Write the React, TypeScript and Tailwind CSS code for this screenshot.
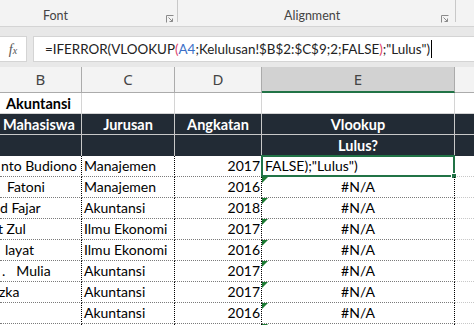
import React from 'react';

const cellFont = { fontFamily: 'Lato, "Liberation Sans", sans-serif' };

type Row = { name: React.ReactNode; namePad: string; jurusan: string; angkatan: string; vlookup: string };

const rows: Row[] = [
  { name: 'nto Budiono', namePad: 'pl-[1px]', jurusan: 'Manajemen', angkatan: '2017', vlookup: 'FALSE);"Lulus")' },
  { name: 'Fatoni', namePad: 'pl-[7px]', jurusan: 'Manajemen', angkatan: '2016', vlookup: '#N/A' },
  { name: 'd Fajar', namePad: 'pl-0', jurusan: 'Akuntansi', angkatan: '2018', vlookup: '#N/A' },
  { name: 't Zul', namePad: '-ml-[2px]', jurusan: 'Ilmu Ekonomi', angkatan: '2017', vlookup: '#N/A' },
  { name: 'layat', namePad: 'pl-[5px]', jurusan: 'Ilmu Ekonomi', angkatan: '2016', vlookup: '#N/A' },
  { name: <><span>.</span><span className="ml-[11px]">Mulia</span></>, namePad: 'pl-[2px]', jurusan: 'Akuntansi', angkatan: '2017', vlookup: '#N/A' },
  { name: 'zka', namePad: '-ml-[1px]', jurusan: 'Akuntansi', angkatan: '2017', vlookup: '#N/A' },
  { name: '', namePad: '', jurusan: 'Akuntansi', angkatan: '2016', vlookup: '#N/A' },
];

function Launcher() {
  return (
    <svg width="8" height="8" viewBox="0 0 8 8" className="text-[#8a8a8a] mb-[3px]">
      <path d="M0.5 7.5V0.5H7.5" fill="none" stroke="currentColor" strokeWidth="1" />
      <path d="M2.5 2.5L6.5 6.5M3.5 6.5H6.5V3.5" fill="none" stroke="currentColor" strokeWidth="1" />
    </svg>
  );
}

function ErrorMark() {
  return <div className="absolute left-0 top-0 w-0 h-0 border-t-[6px] border-t-[#1e7b34] border-r-[6px] border-r-transparent" />;
}

export default function App() {
  return (
    <div className="w-[474px] h-[325px] overflow-hidden bg-white relative">
      {/* Ribbon group labels */}
      <div className="h-[27px] bg-[#f3f3f3] border-b border-[#d4d4d4] flex items-start" style={{ fontFamily: 'Lato, "Noto Sans", sans-serif' }}>
        <div className="w-[177px] h-full flex items-end justify-between pl-[43px] pr-[3px]">
          <span className="text-[12.5px] leading-none text-[#444] pb-[4px]">Font</span>
          <Launcher />
        </div>
        <div className="w-px h-[22px] bg-[#c8c8c8]" />
        <div className="w-[277px] h-full flex items-end justify-between pl-[106px] pr-[6px]">
          <span className="text-[12.5px] leading-none text-[#444] pb-[4px]">Alignment</span>
          <Launcher />
        </div>
        <div className="w-px h-[22px] bg-[#c8c8c8]" />
      </div>

      {/* Formula bar */}
      <div className="h-[40px] bg-[#e8e8e8] flex items-start pt-[9px] gap-[6px]">
        <div className="w-[27px] h-[26px] bg-white border border-l-0 border-[#d4d4d4] flex items-center justify-center text-[#555]" style={{ fontFamily: '"Liberation Serif", serif' }}>
          <span className="italic text-[14px]">f</span><span className="italic text-[10px] mt-[3px]">x</span>
        </div>
        <div className="flex-1 h-[26px] bg-white border border-r-0 border-[#d4d4d4] flex items-center pl-[11px] text-[13.4px] text-[#222] whitespace-nowrap" style={{ fontFamily: 'Lato, "Noto Sans", sans-serif' }}>
          <span>=IFERROR(VLOOKUP</span>
          <span className="text-[#e0446a]">(</span>
          <span className="text-[#3b6fc7]">A4</span>
          <span>;Kelulusan!$B$2:$C$9;2;FALSE</span>
          <span className="text-[#e0446a]">)</span>
          <span>;"Lulus")</span>
          <span className="w-[1px] h-[18px] bg-black ml-[1px]" />
        </div>
      </div>

      {/* Column headers */}
      <div className="grid grid-cols-[82px_93px_87px_193px_19px] h-[26px] bg-[#f3f3f3] text-[15px] text-[#444]" style={{ fontFamily: '"Noto Sans", sans-serif' }}>
        <div className="border-r border-b border-[#ababab] flex items-center justify-center">B</div>
        <div className="border-r border-b border-[#ababab] flex items-center justify-center">C</div>
        <div className="border-r border-b border-[#ababab] flex items-center justify-center">D</div>
        <div className="border-r border-[#ababab] border-b-2 border-b-[#217346] bg-[#d2d2d2] flex items-center justify-center">E</div>
        <div className="border-b border-[#ababab]" />
      </div>

      {/* Sheet */}
      <div className="grid grid-cols-[82px_93px_87px_193px_19px] auto-rows-[21px] text-[14px] text-black" style={cellFont}>
        {/* Title row */}
        <div className="border-r border-b border-[#d4d4d4] font-bold text-[14.5px] text-right pr-[10px] leading-[21px] whitespace-nowrap">Akuntansi</div>
        <div className="border-r border-b border-[#d4d4d4]" />
        <div className="border-r border-b border-[#d4d4d4]" />
        <div className="border-r border-b border-[#d4d4d4]" />
        <div className="border-b border-[#d4d4d4]" />

        {/* Header rows */}
        <div className="bg-[#222b35] border-r border-b border-[#c8c8c8] text-white font-bold text-[14.5px] pl-[3px] leading-[21px] whitespace-nowrap overflow-hidden">Mahasiswa</div>
        <div className="bg-[#222b35] border-r border-b border-[#c8c8c8] text-white font-bold text-[14.5px] text-center leading-[21px]">Jurusan</div>
        <div className="bg-[#222b35] border-r border-b border-[#c8c8c8] text-white font-bold text-[14.5px] text-center leading-[21px]">Angkatan</div>
        <div className="bg-[#222b35] border-r border-b border-[#c8c8c8] text-white font-bold text-[14.5px] text-center leading-[21px]">Vlookup</div>
        <div className="bg-[#222b35] border-b border-[#c8c8c8]" />

        <div className="bg-[#222b35] border-r border-[#c8c8c8]" />
        <div className="bg-[#222b35] border-r border-[#c8c8c8]" />
        <div className="bg-[#222b35] border-r border-[#c8c8c8]" />
        <div className="bg-[#222b35] border-r border-[#c8c8c8] text-white font-bold text-[14.5px] text-center leading-[21px]">Lulus?</div>
        <div className="bg-[#222b35]" />

        {rows.map((r, i) => (
          <React.Fragment key={i}>
            <div className="border-r border-r-black border-b border-dotted border-b-[#7a7a7a] leading-[20px] whitespace-nowrap overflow-hidden">
              <span className={`inline-block ${r.namePad}`}>{r.name}</span>
            </div>
            <div className="border-r border-r-black border-b border-dotted border-b-[#7a7a7a] leading-[20px] pl-[2px] whitespace-nowrap">{r.jurusan}</div>
            <div className="border-r border-r-black border-b border-dotted border-b-[#7a7a7a] leading-[20px] text-right pr-[1px]">{r.angkatan}</div>
            {i === 0 ? (
              <div className="relative border-2 border-[#217346] -ml-[1px] -mt-[1px] h-[22px] leading-[18px] pl-[2px] whitespace-nowrap">
                {r.vlookup}
                <div className="absolute -right-[4px] -bottom-[4px] w-[6px] h-[6px] bg-[#217346] border border-white" />
              </div>
            ) : (
              <div className="relative border-r border-r-black border-b border-dotted border-b-[#7a7a7a] leading-[20px] text-center">
                <ErrorMark />
                {r.vlookup}
              </div>
            )}
            <div className="border-b border-dotted border-b-[#c8c8c8]" />
          </React.Fragment>
        ))}
        <div className="border-r border-r-black" />
        <div className="border-r border-r-black" />
        <div className="border-r border-r-black" />
        <div className="relative border-r border-r-black"><ErrorMark /></div>
        <div />
      </div>
    </div>
  );
}
